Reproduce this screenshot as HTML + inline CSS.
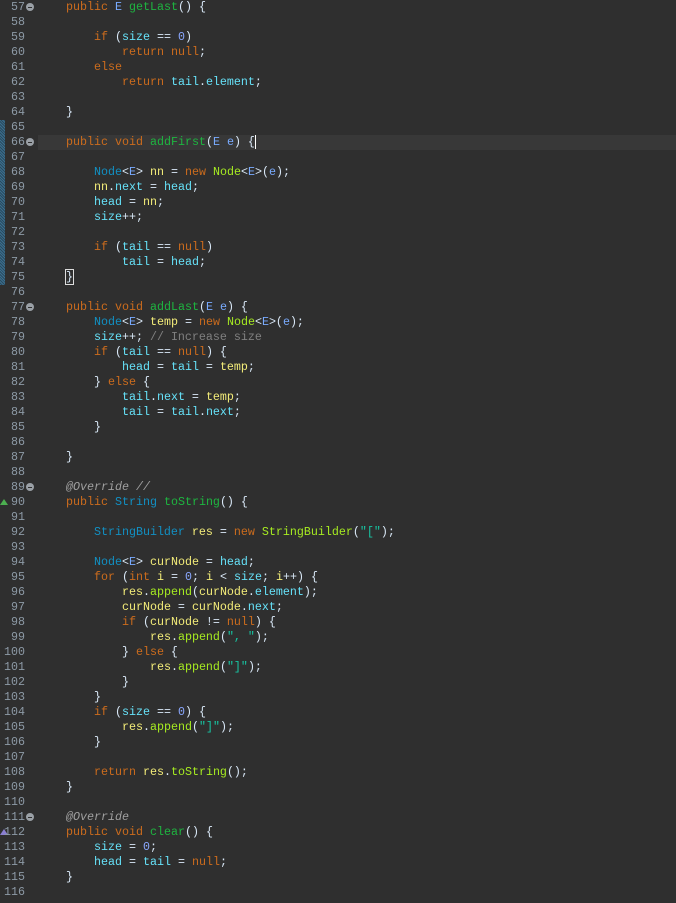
<!DOCTYPE html>
<html><head><meta charset="utf-8"><style>
body{margin:0;background:#2f2f2f;width:676px;height:903px;overflow:hidden;font-family:"Liberation Mono",monospace;font-size:11.67px;}
.l{position:relative;height:15px;line-height:15px;white-space:pre;color:#d9e8f7}
.n{position:absolute;left:0;width:25px;text-align:right;color:#8d9aa6}
.c{position:absolute;left:66px}
.fold{position:absolute;left:26px;top:3px;width:8px;height:8px;border-radius:50%;background:#9aa0a6}
.fold:after{content:"";position:absolute;left:2px;top:3.5px;width:4px;height:1px;background:#2f2f2f}
.hlb{position:absolute;left:38px;right:0;top:0;height:15px;background:#383838}
.k{color:#cc6c1d}.m{color:#1eb540}.a{color:#a7ec21}.f{color:#66e1f8}.v{color:#f3ec79}.t{color:#1290c3}.s{color:#17c6a3}.p{color:#79abff}.d{color:#8aa8ff}.an{color:#a0a0a0;font-style:italic}.cm{color:#808080}
.bar{position:absolute;left:0;width:5px;background:repeating-linear-gradient(45deg,#3b6f8f 0 1px,#2a4a5e 1px 2px)}
.tri{position:absolute;left:0;top:4px;width:0;height:0;border-left:4px solid transparent;border-right:4px solid transparent;border-bottom:6px solid #4caf50}
</style></head><body>
<div class="bar" style="top:120px;height:165px"></div>
<div class="l"><span class="n">57</span><span class="fold"></span><span class="c"><span class="k">public</span> <span class="p">E</span> <span class="m">getLast</span>() {</span></div>
<div class="l"><span class="n">58</span></div>
<div class="l"><span class="n">59</span><span class="c">    <span class="k">if</span> (<span class="f">size</span> == <span class="d">0</span>)</span></div>
<div class="l"><span class="n">60</span><span class="c">        <span class="k">return</span> <span class="k">null</span>;</span></div>
<div class="l"><span class="n">61</span><span class="c">    <span class="k">else</span></span></div>
<div class="l"><span class="n">62</span><span class="c">        <span class="k">return</span> <span class="f">tail</span>.<span class="f">element</span>;</span></div>
<div class="l"><span class="n">63</span></div>
<div class="l"><span class="n">64</span><span class="c">}</span></div>
<div class="l"><span class="n">65</span></div>
<div class="l"><span class="hlb"></span><span class="n">66</span><span class="fold"></span><span class="c"><span class="k">public</span> <span class="k">void</span> <span class="m">addFirst</span>(<span class="p">E</span> <span class="p">e</span>) {<span style="border-left:1px solid #fff"></span></span></div>
<div class="l"><span class="n">67</span></div>
<div class="l"><span class="n">68</span><span class="c">    <span class="t">Node</span>&lt;<span class="p">E</span>&gt; <span class="v">nn</span> = <span class="k">new</span> <span class="a">Node</span>&lt;<span class="p">E</span>&gt;(<span class="p">e</span>);</span></div>
<div class="l"><span class="n">69</span><span class="c">    <span class="v">nn</span>.<span class="f">next</span> = <span class="f">head</span>;</span></div>
<div class="l"><span class="n">70</span><span class="c">    <span class="f">head</span> = <span class="v">nn</span>;</span></div>
<div class="l"><span class="n">71</span><span class="c">    <span class="f">size</span>++;</span></div>
<div class="l"><span class="n">72</span></div>
<div class="l"><span class="n">73</span><span class="c">    <span class="k">if</span> (<span class="f">tail</span> == <span class="k">null</span>)</span></div>
<div class="l"><span class="n">74</span><span class="c">        <span class="f">tail</span> = <span class="f">head</span>;</span></div>
<div class="l"><span class="n">75</span><span class="c"><span style="outline:1px solid #ddd">}</span></span></div>
<div class="l"><span class="n">76</span></div>
<div class="l"><span class="n">77</span><span class="fold"></span><span class="c"><span class="k">public</span> <span class="k">void</span> <span class="m">addLast</span>(<span class="p">E</span> <span class="p">e</span>) {</span></div>
<div class="l"><span class="n">78</span><span class="c">    <span class="t">Node</span>&lt;<span class="p">E</span>&gt; <span class="v">temp</span> = <span class="k">new</span> <span class="a">Node</span>&lt;<span class="p">E</span>&gt;(<span class="p">e</span>);</span></div>
<div class="l"><span class="n">79</span><span class="c">    <span class="f">size</span>++; <span class="cm">// Increase size</span></span></div>
<div class="l"><span class="n">80</span><span class="c">    <span class="k">if</span> (<span class="f">tail</span> == <span class="k">null</span>) {</span></div>
<div class="l"><span class="n">81</span><span class="c">        <span class="f">head</span> = <span class="f">tail</span> = <span class="v">temp</span>;</span></div>
<div class="l"><span class="n">82</span><span class="c">    } <span class="k">else</span> {</span></div>
<div class="l"><span class="n">83</span><span class="c">        <span class="f">tail</span>.<span class="f">next</span> = <span class="v">temp</span>;</span></div>
<div class="l"><span class="n">84</span><span class="c">        <span class="f">tail</span> = <span class="f">tail</span>.<span class="f">next</span>;</span></div>
<div class="l"><span class="n">85</span><span class="c">    }</span></div>
<div class="l"><span class="n">86</span></div>
<div class="l"><span class="n">87</span><span class="c">}</span></div>
<div class="l"><span class="n">88</span></div>
<div class="l"><span class="n">89</span><span class="fold"></span><span class="c"><span class="an">@Override //</span></span></div>
<div class="l"><span class="tri"></span><span class="n">90</span><span class="c"><span class="k">public</span> <span class="t">String</span> <span class="m">toString</span>() {</span></div>
<div class="l"><span class="n">91</span></div>
<div class="l"><span class="n">92</span><span class="c">    <span class="t">StringBuilder</span> <span class="v">res</span> = <span class="k">new</span> <span class="a">StringBuilder</span>(<span class="s">"["</span>);</span></div>
<div class="l"><span class="n">93</span></div>
<div class="l"><span class="n">94</span><span class="c">    <span class="t">Node</span>&lt;<span class="p">E</span>&gt; <span class="v">curNode</span> = <span class="f">head</span>;</span></div>
<div class="l"><span class="n">95</span><span class="c">    <span class="k">for</span> (<span class="k">int</span> <span class="v">i</span> = <span class="d">0</span>; <span class="v">i</span> &lt; <span class="f">size</span>; <span class="v">i</span>++) {</span></div>
<div class="l"><span class="n">96</span><span class="c">        <span class="v">res</span>.<span class="a">append</span>(<span class="v">curNode</span>.<span class="f">element</span>);</span></div>
<div class="l"><span class="n">97</span><span class="c">        <span class="v">curNode</span> = <span class="v">curNode</span>.<span class="f">next</span>;</span></div>
<div class="l"><span class="n">98</span><span class="c">        <span class="k">if</span> (<span class="v">curNode</span> != <span class="k">null</span>) {</span></div>
<div class="l"><span class="n">99</span><span class="c">            <span class="v">res</span>.<span class="a">append</span>(<span class="s">", "</span>);</span></div>
<div class="l"><span class="n">100</span><span class="c">        } <span class="k">else</span> {</span></div>
<div class="l"><span class="n">101</span><span class="c">            <span class="v">res</span>.<span class="a">append</span>(<span class="s">"]"</span>);</span></div>
<div class="l"><span class="n">102</span><span class="c">        }</span></div>
<div class="l"><span class="n">103</span><span class="c">    }</span></div>
<div class="l"><span class="n">104</span><span class="c">    <span class="k">if</span> (<span class="f">size</span> == <span class="d">0</span>) {</span></div>
<div class="l"><span class="n">105</span><span class="c">        <span class="v">res</span>.<span class="a">append</span>(<span class="s">"]"</span>);</span></div>
<div class="l"><span class="n">106</span><span class="c">    }</span></div>
<div class="l"><span class="n">107</span></div>
<div class="l"><span class="n">108</span><span class="c">    <span class="k">return</span> <span class="v">res</span>.<span class="a">toString</span>();</span></div>
<div class="l"><span class="n">109</span><span class="c">}</span></div>
<div class="l"><span class="n">110</span></div>
<div class="l"><span class="n">111</span><span class="fold"></span><span class="c"><span class="an">@Override</span></span></div>
<div class="l"><span class="tri" style="border-bottom-color:#8a7fd0"></span><span class="n">112</span><span class="c"><span class="k">public</span> <span class="k">void</span> <span class="m">clear</span>() {</span></div>
<div class="l"><span class="n">113</span><span class="c">    <span class="f">size</span> = <span class="d">0</span>;</span></div>
<div class="l"><span class="n">114</span><span class="c">    <span class="f">head</span> = <span class="f">tail</span> = <span class="k">null</span>;</span></div>
<div class="l"><span class="n">115</span><span class="c">}</span></div>
<div class="l"><span class="n">116</span></div>
</body></html>
